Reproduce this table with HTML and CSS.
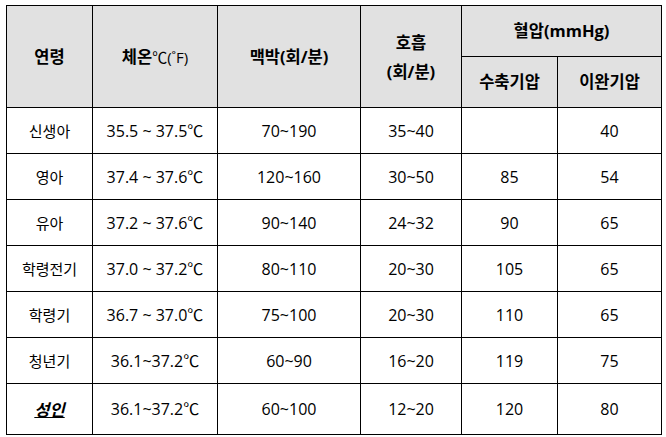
FILE: index.html
```html
<!DOCTYPE html>
<html lang="ko">
<head>
<meta charset="utf-8">
<link rel="stylesheet" href="styles.css">
</head>
<body>
<table class="vitals">
  <colgroup>
    <col class="c1"><col class="c2"><col class="c3"><col class="c4"><col class="c5"><col class="c6">
  </colgroup>
  <thead>
    <tr class="h1">
      <th rowspan="2">연령</th>
      <th rowspan="2">체온<span class="sym">℃(˚F)</span></th>
      <th rowspan="2">맥박(회/분)</th>
      <th rowspan="2" class="two"><span class="ln">호흡</span><span class="ln">(회/분)</span></th>
      <th colspan="2">혈압(mmHg)</th>
    </tr>
    <tr class="h2">
      <th>수축기압</th>
      <th>이완기압</th>
    </tr>
  </thead>
  <tbody>
    <tr><td>신생아</td><td>35.5 ~ 37.5℃</td><td>70~190</td><td>35~40</td><td></td><td>40</td></tr>
    <tr><td>영아</td><td>37.4 ~ 37.6℃</td><td>120~160</td><td>30~50</td><td>85</td><td>54</td></tr>
    <tr><td>유아</td><td>37.2 ~ 37.6℃</td><td>90~140</td><td>24~32</td><td>90</td><td>65</td></tr>
    <tr><td>학령전기</td><td>37.0 ~ 37.2℃</td><td>80~110</td><td>20~30</td><td>105</td><td>65</td></tr>
    <tr><td>학령기</td><td>36.7 ~ 37.0℃</td><td>75~100</td><td>20~30</td><td>110</td><td>65</td></tr>
    <tr><td>청년기</td><td>36.1~37.2℃</td><td>60~90</td><td>16~20</td><td>119</td><td>75</td></tr>
    <tr class="last"><td><span class="adult">성인</span></td><td>36.1~37.2℃</td><td>60~100</td><td>12~20</td><td>120</td><td>80</td></tr>
  </tbody>
</table>
</body>
</html>
```
FILE: styles.css
```css
html, body {
  margin: 0;
  padding: 0;
  background: #ffffff;
}
body {
  padding: 5px 0 0 6px;
  font-family: "Open Sans", "Noto Sans CJK KR", sans-serif;
  color: #000;
}
.vitals {
  border-collapse: collapse;
  table-layout: fixed;
  width: 655px;
  font-size: 16px;
}
.c1 { width: 86px; }
.c2 { width: 125px; }
.c3 { width: 143px; }
.c4 { width: 101px; }
.c5 { width: 96px; }
.c6 { width: 104px; }
.vitals th, .vitals td {
  border: 1px solid #000;
  padding: 0;
  text-align: center;
  vertical-align: middle;
  line-height: 20px;
}
.vitals th {
  background: #e1e1e1;
  font-weight: bold;
  font-family: "Open Sans", "Noto Sans CJK KR", sans-serif;
  font-size: 16.5px;
}
.vitals th .sym {
  font-weight: normal;
  font-size: 15px;
}
.vitals th.two .ln {
  display: block;
  line-height: 29px;
}
.h1 { height: 51px; }
.h2 { height: 51px; }
.vitals tbody tr { height: 46px; }
.vitals tbody tr.last { height: 51px; }
.vitals tbody td:first-child {
  font-family: "Noto Sans CJK KR", sans-serif;
  font-size: 15px;
}
.adult {
  font-style: italic;
  font-weight: bold;
  text-decoration: underline;
  font-size: 16.5px;
}
```
